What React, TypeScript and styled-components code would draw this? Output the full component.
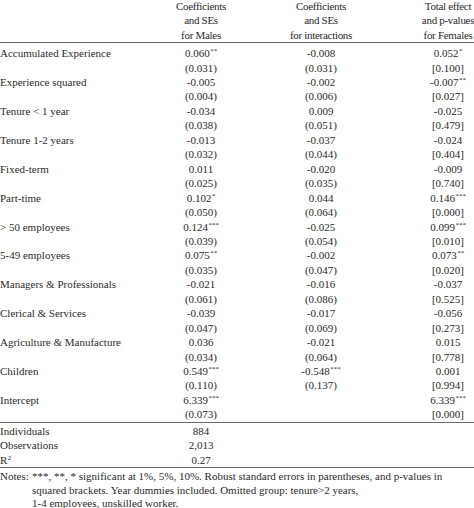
import styled, { createGlobalStyle } from "styled-components";

const GlobalStyle = createGlobalStyle`
  html, body {
    margin: 0;
    padding: 0;
    background: #ffffff;
  }
  body {
    font-family: "Liberation Serif", "DejaVu Serif", serif;
    color: #2b2b2b;
  }
`;

const Page = styled.div`
  width: 474px;
  height: 508px;
  overflow: hidden;
  font-size: 11px;
  line-height: 14.45px;
`;

const Section = styled.div<{ $pad?: string }>`
  display: grid;
  grid-template-columns: 160px 82px 38px 82px 60px 52px;
  padding: ${(p) => p.$pad || "0"};
  border-bottom: 1px solid #6a6a6a;
`;

const HeaderBlock = styled(Section)`
  margin-top: -1.3px;
`;

const Label = styled.div`
  grid-column: 1;
  white-space: nowrap;
`;

const Cell = styled.div<{ $col: number }>`
  grid-column: ${(p) => p.$col};
  text-align: center;
  white-space: nowrap;
`;

const HeadCell = styled(Cell)`
  grid-row: 1;
  margin: 0 -20px;
  letter-spacing: -0.3px;
`;

const Stars = styled.sup`
  font-size: 7px;
  line-height: 0;
  vertical-align: 0;
  position: relative;
  top: -4px;
  margin-left: 0.5px;
`;

const Notes = styled.div`
  display: flex;
  padding-top: 2px;
  line-height: 13.6px;
`;

const NoteLabel = styled.div`
  width: 32px;
  flex: none;
`;

const NoteBody = styled.div`
  white-space: nowrap;
`;

type Row = {
  label: string;
  m: [string, string];
  i: [string, string];
  f: [string, string];
};

const rows: Row[] = [
  { label: "Accumulated Experience", m: ["0.060**", "(0.031)"], i: ["-0.008", "(0.031)"], f: ["0.052*", "[0.100]"] },
  { label: "Experience squared", m: ["-0.005", "(0.004)"], i: ["-0.002", "(0.006)"], f: ["-0.007**", "[0.027]"] },
  { label: "Tenure < 1 year", m: ["-0.034", "(0.038)"], i: ["0.009", "(0.051)"], f: ["-0.025", "[0.479]"] },
  { label: "Tenure 1-2 years", m: ["-0.013", "(0.032)"], i: ["-0.037", "(0.044)"], f: ["-0.024", "[0.404]"] },
  { label: "Fixed-term", m: ["0.011", "(0.025)"], i: ["-0.020", "(0.035)"], f: ["-0.009", "[0.740]"] },
  { label: "Part-time", m: ["0.102*", "(0.050)"], i: ["0.044", "(0.064)"], f: ["0.146***", "[0.000]"] },
  { label: "> 50 employees", m: ["0.124***", "(0.039)"], i: ["-0.025", "(0.054)"], f: ["0.099***", "[0.010]"] },
  { label: "5-49 employees", m: ["0.075**", "(0.035)"], i: ["-0.002", "(0.047)"], f: ["0.073**", "[0.020]"] },
  { label: "Managers & Professionals", m: ["-0.021", "(0.061)"], i: ["-0.016", "(0.086)"], f: ["-0.037", "[0.525]"] },
  { label: "Clerical & Services", m: ["-0.039", "(0.047)"], i: ["-0.017", "(0.069)"], f: ["-0.056", "[0.273]"] },
  { label: "Agriculture & Manufacture", m: ["0.036", "(0.034)"], i: ["-0.021", "(0.064)"], f: ["0.015", "[0.778]"] },
  { label: "Children", m: ["0.549***", "(0.110)"], i: ["-0.548***", "(0.137)"], f: ["0.001", "[0.994]"] },
  { label: "Intercept", m: ["6.339***", "(0.073)"], i: ["", ""], f: ["6.339***", "[0.000]"] },
];

const Value = ({ v }: { v: string }) => {
  const m = v.match(/^([^*]*)(\**)$/);
  const num = m ? m[1] : v;
  const st = m ? m[2] : "";
  return (
    <>
      {num}
      {st && <Stars>{st}</Stars>}
    </>
  );
};

export default function App() {
  return (
    <Page>
      <GlobalStyle />
      <HeaderBlock>
        <HeadCell $col={2}>
          Coefficients
          <br />
          and SEs
          <br />
          for Males
        </HeadCell>
        <HeadCell $col={4}>
          Coefficients
          <br />
          and SEs
          <br />
          for interactions
        </HeadCell>
        <HeadCell $col={6}>
          Total effect
          <br />
          and p-values
          <br />
          for Females
        </HeadCell>
      </HeaderBlock>

      <Section $pad="3px 0 0">
        {rows.map((r) => (
          <>
            <Label key={r.label}>{r.label}</Label>
            <Cell $col={2}>
              <Value v={r.m[0]} />
            </Cell>
            <Cell $col={4}>
              <Value v={r.i[0]} />
            </Cell>
            <Cell $col={6}>
              <Value v={r.f[0]} />
            </Cell>
            <Label />
            <Cell $col={2}>{r.m[1]}</Cell>
            <Cell $col={4}>{r.i[1]}</Cell>
            <Cell $col={6}>{r.f[1]}</Cell>
          </>
        ))}
      </Section>

      <Section $pad="1px 0 0">
        <Label>Individuals</Label>
        <Cell $col={2}>884</Cell>
        <Label>Observations</Label>
        <Cell $col={2}>2,013</Cell>
        <Label>
          R<Stars>2</Stars>
        </Label>
        <Cell $col={2}>0.27</Cell>
      </Section>

      <Notes>
        <NoteLabel>Notes:</NoteLabel>
        <NoteBody>
          ***, **, * significant at 1%, 5%, 10%. Robust standard errors in parentheses, and p-values in
          <br />
          squared brackets. Year dummies included. Omitted group: tenure&gt;2 years,
          <br />
          1-4 employees, unskilled worker.
        </NoteBody>
      </Notes>
    </Page>
  );
}
